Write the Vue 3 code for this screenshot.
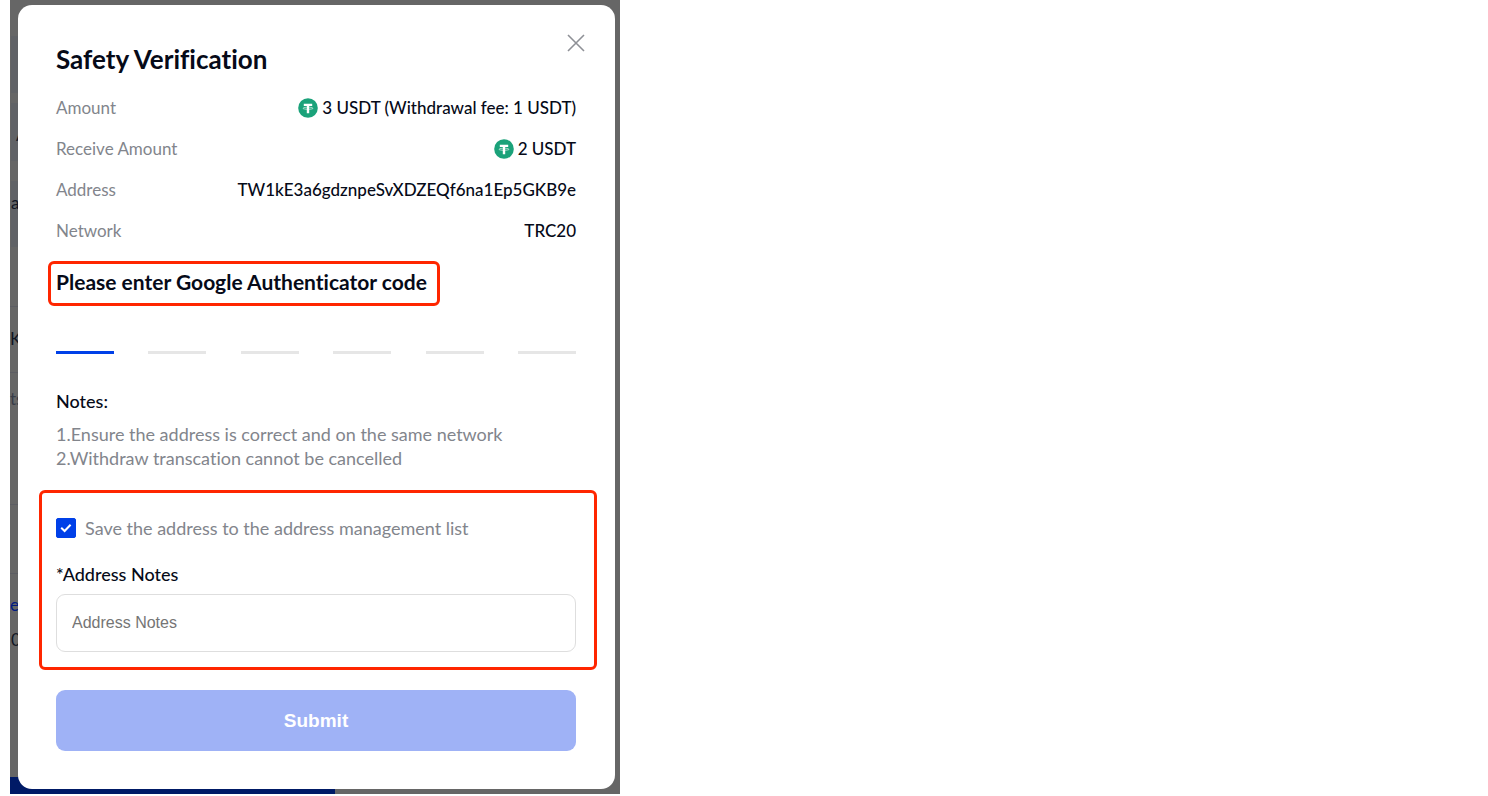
<script setup>
import { ref } from 'vue';

const summary = [
  { label: 'Amount', value: '3 USDT (Withdrawal fee: 1 USDT)', coin: true },
  { label: 'Receive Amount', value: '2 USDT', coin: true },
  { label: 'Address', value: 'TW1kE3a6gdznpeSvXDZEQf6na1Ep5GKB9e' },
  { label: 'Network', value: 'TRC20' },
];

const code = ref(['', '', '', '', '', '']);
const saveAddress = ref(true);
const addressNotes = ref('');
</script>

<template>
  <main class="screen">
    <div class="backdrop" aria-hidden="true">
      <div class="page-block is-first"></div>
      <div class="page-block is-second">A</div>
      <div class="page-block is-third">a</div>
      <div class="page-row is-account">K</div>
      <div class="page-row is-assets">ts</div>
      <div class="page-row is-empty"></div>
      <div class="page-row is-fee"><span class="page-link">e</span><span class="page-total">0</span></div>
      <div class="page-button"></div>
    </div>

    <form class="modal" @submit.prevent>
      <header class="modal-header">
        <h1 class="modal-title">Safety Verification</h1>
        <button type="button" class="close" aria-label="Close">
          <svg class="close-icon" viewBox="0 0 18 18">
            <path d="M1 1L17 17M17 1L1 17" />
          </svg>
        </button>
      </header>

      <dl class="summary">
        <div v-for="item in summary" :key="item.label" class="summary-row">
          <dt>{{ item.label }}</dt>
          <dd>
            <svg v-if="item.coin" class="coin" viewBox="0 0 20 20">
              <circle cx="10" cy="10" r="9.8" fill="#1ba27a" />
              <path d="M5.8 5.8H14.2V8H11.2V15.2H8.8V8H5.8Z" fill="#fff" />
              <path
                d="M8.8 9.3C6.5 9.4 5 9.8 5 10.3S7.2 11.3 10 11.3S15 10.8 15 10.3S13.5 9.4 11.2 9.3"
                fill="none"
                stroke="#fff"
                stroke-width="0.6"
              />
            </svg>
            <span>{{ item.value }}</span>
          </dd>
        </div>
      </dl>

      <h2 class="code-title">Please enter Google Authenticator code</h2>
      <div class="code">
        <input
          v-for="(digit, index) in code"
          :key="index"
          v-model="code[index]"
          class="code-digit"
          :class="{ 'is-active': index === 0 }"
          maxlength="1"
          inputmode="numeric"
          :aria-label="`Digit ${index + 1}`"
        />
      </div>

      <h3 class="notes-title">Notes:</h3>
      <p class="notes">
        1.Ensure the address is correct and on the same network<br />
        2.Withdraw transcation cannot be cancelled
      </p>

      <section class="save">
        <label class="save-label">
          <input v-model="saveAddress" type="checkbox" class="save-check" />
          <svg class="save-tick" viewBox="0 0 20 20">
            <path d="M5.2 9.8L8.6 13L14.6 6.8" />
          </svg>
          <span>Save the address to the address management list</span>
        </label>
        <label class="field-label" for="address-notes">*Address Notes</label>
        <input
          id="address-notes"
          v-model="addressNotes"
          type="text"
          class="field"
          placeholder="Address Notes"
        />
      </section>

      <button type="submit" class="submit">Submit</button>
    </form>
  </main>
</template>

<style>
body {
  margin: 0;
  background: #fff;
}
</style>

<style scoped>
* {
  box-sizing: border-box;
}

.screen {
  display: grid;
  width: 41%;
  min-width: 560px;
  margin-left: 10px;
  background: #666;
  color: #060a18;
  font-family: Lato, 'Open Sans', sans-serif;
  font-size: 17px;
  font-variant-ligatures: none;
  line-height: 24px;
}

.backdrop,
.modal {
  grid-area: 1 / 1;
  min-width: 0;
}

.backdrop {
  display: flex;
  flex-direction: column;
  color: #111624;
}

.page-block {
  width: 40px;
  margin-left: 1px;
  background: #606266;
}

.page-block.is-first {
  height: 57px;
  margin-top: 36px;
}

.page-block.is-second {
  height: 58px;
  margin-top: 10px;
  padding: 20px 5px;
}

.page-block.is-third {
  height: 66px;
  margin-top: 20px;
  padding-top: 10px;
}

.page-row {
  width: 40px;
  border-top: 1px solid #5c5d63;
}

.page-row.is-account {
  height: 66px;
  margin-top: 59px;
  padding-top: 20px;
}

.page-row.is-assets {
  height: 132px;
  padding-top: 14px;
  color: #383c48;
}

.page-row.is-empty {
  height: 69px;
}

.page-row.is-fee {
  display: flex;
  flex-direction: column;
  gap: 11px;
  padding-top: 19px;
}

.page-link {
  color: #001a80;
}

.page-total {
  padding-left: 1px;
}

.page-button {
  width: 325px;
  height: 17px;
  margin-top: auto;
  background: #001a66;
}

.modal {
  display: flex;
  flex-direction: column;
  margin: 5px 5px 5px 8px;
  padding: 36px 39px 38px 38px;
  border-radius: 14px;
  background: #fff;
}

.modal-header {
  display: flex;
  justify-content: space-between;
}

.modal-title {
  margin: 0;
  font-size: 26px;
  font-weight: 700;
  line-height: 36px;
}

.close {
  width: 18px;
  height: 18px;
  margin: -7px -9px 0 0;
  padding: 0;
  border: 0;
  background: none;
}

.close-icon {
  display: block;
  fill: none;
  stroke: #8e9096;
  stroke-width: 1.6;
}

.summary {
  margin: 10px 0 0;
}

.summary-row {
  display: flex;
  align-items: center;
  justify-content: space-between;
  height: 41px;
}

.summary-row dt {
  color: #82858c;
}

.summary-row dd {
  display: flex;
  align-items: center;
  gap: 4px;
  margin: 0;
  font-weight: 500;
}

.coin {
  width: 20px;
  height: 20px;
}

.code-title {
  align-self: flex-start;
  height: 45px;
  margin: 10px 0 0 -8px;
  padding: 0 10px 0 5px;
  border: 3px solid #ff2600;
  border-radius: 6px;
  font-size: 21px;
  font-weight: 700;
  line-height: 36px;
}

.code {
  display: flex;
  justify-content: space-between;
  margin-top: 8px;
}

.code-digit {
  width: 58px;
  height: 40px;
  padding: 0;
  border: 0;
  border-bottom: 3px solid #e6e6e6;
  border-radius: 0;
  background: none;
  font: inherit;
  text-align: center;
  outline: none;
}

.code-digit.is-active {
  border-color: #0040e8;
}

.notes-title {
  margin: 35px 0 0;
  font-size: 18px;
  font-weight: 500;
}

.notes {
  margin: 9px 0 0;
  color: #82858c;
  font-size: 18px;
}

.save {
  display: flex;
  flex-direction: column;
  margin: 20px -21px 0 -17px;
  padding: 23px 18px 15px 14px;
  border: 3px solid #ff2600;
  border-radius: 6px;
  font-size: 18px;
}

.save-label {
  display: grid;
  grid-template-columns: 20px 1fr;
  align-items: center;
  column-gap: 9px;
  color: #82858c;
}

.save-check,
.save-tick {
  grid-area: 1 / 1;
  width: 20px;
  height: 20px;
  margin: 0;
}

.save-check {
  appearance: none;
  border: 1px solid #0040e8;
  border-radius: 2px;
}

.save-check:checked {
  background: #0040e8;
}

.save-tick {
  fill: none;
  stroke: #fff;
  stroke-width: 2;
  pointer-events: none;
}

.field-label {
  margin-top: 22px;
  font-weight: 500;
}

.field {
  width: 100%;
  height: 58px;
  margin-top: 8px;
  padding: 0 15px;
  border: 1px solid #dedede;
  border-radius: 9px;
  font-family: 'Liberation Sans', Arial, sans-serif;
  font-size: 16px;
}

.field::placeholder {
  color: #757575;
}

.submit {
  height: 61px;
  margin-top: 20px;
  border: 0;
  border-radius: 9px;
  background: #9fb2f6;
  color: #fff;
  font-family: 'Liberation Sans', Arial, sans-serif;
  font-size: 19px;
  font-weight: 700;
}
</style>
